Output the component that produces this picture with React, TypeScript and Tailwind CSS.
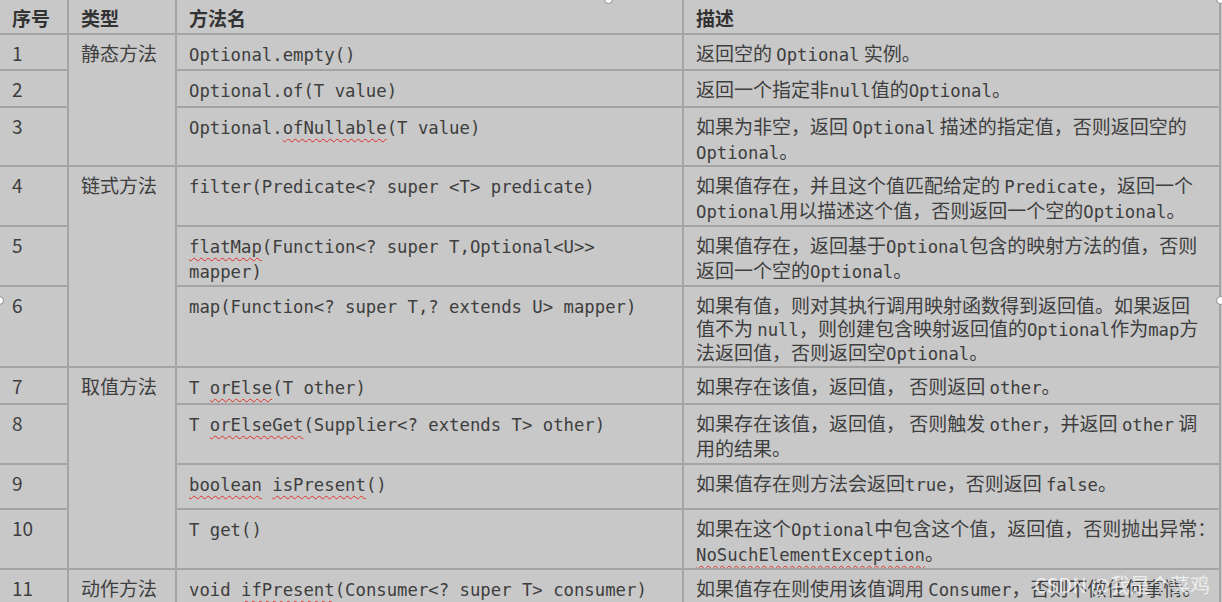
import React from "react";

const mono = "font-['DejaVu_Sans_Mono',monospace] text-[17.3px]";
const wavy =
  " underline decoration-wavy decoration-[#e0302a] decoration-1 underline-offset-[4px]";
const cell =
  "bg-[#c8c8c8] pl-3 pt-[7px] text-[19px] leading-[22.5px] text-[#3e3e3e] font-['Noto_Sans_CJK_SC',sans-serif] whitespace-nowrap overflow-hidden";

// ASCII runs go in the code font; in prose, spaces at the edges of a run stay narrow (CJK font)
function Ascii({ q, narrow }: { q: string; narrow: boolean }) {
  if (!narrow) return <span className={mono + " whitespace-pre"}>{q}</span>;
  const m = q.match(/^( *)([\s\S]*?)( *)$/);
  const lead = m ? m[1] : "";
  const body = m ? m[2] : q;
  const tail = m ? m[3] : "";
  return (
    <>
      {lead && <span className="whitespace-pre">{lead}</span>}
      {body && <span className={mono + " whitespace-pre"}>{body}</span>}
      {tail && <span className="whitespace-pre">{tail}</span>}
    </>
  );
}

function Mix({ t, narrow }: { t: string; narrow: boolean }) {
  const parts = t.split(/(~[^~]+~)/);
  return (
    <>
      {parts.map((p, i) =>
        p.startsWith("~") ? (
          <span key={i} className={mono + wavy}>
            {p.slice(1, -1)}
          </span>
        ) : (
          p.split(/([\x00-\x7F]+)/).map((q, j) =>
            /^[\x00-\x7F]+$/.test(q) ? (
              <Ascii key={i + "-" + j} q={q} narrow={narrow} />
            ) : (
              <React.Fragment key={i + "-" + j}>{q}</React.Fragment>
            )
          )
        )
      )}
    </>
  );
}

function Lines({ lines, narrow = false }: { lines: string[]; narrow?: boolean }) {
  return (
    <>
      {lines.map((l, i) => (
        <div key={i}>
          <Mix t={l} narrow={narrow} />
        </div>
      ))}
    </>
  );
}

type Row = { n: string; type?: string; span?: string; method: string[]; desc: string[] };

const rows: Row[] = [
  { n: "1", type: "静态方法", span: "row-span-3", method: ["Optional.empty()"], desc: ["返回空的 Optional 实例。"] },
  { n: "2", method: ["Optional.of(T value)"], desc: ["返回一个指定非null值的Optional。"] },
  {
    n: "3",
    method: ["Optional.~ofNullable~(T value)"],
    desc: ["如果为非空，返回 Optional 描述的指定值，否则返回空的", "Optional。"],
  },
  {
    n: "4",
    type: "链式方法",
    span: "row-span-3",
    method: ["filter(Predicate<? super <T> predicate)"],
    desc: ["如果值存在，并且这个值匹配给定的 Predicate，返回一个", "Optional用以描述这个值，否则返回一个空的Optional。"],
  },
  {
    n: "5",
    method: ["~flatMap~(Function<? super T,Optional<U>>", "mapper)"],
    desc: ["如果值存在，返回基于Optional包含的映射方法的值，否则", "返回一个空的Optional。"],
  },
  {
    n: "6",
    method: ["map(Function<? super T,? extends U> mapper)"],
    desc: [
      "如果有值，则对其执行调用映射函数得到返回值。如果返回",
      "值不为 null，则创建包含映射返回值的Optional作为map方",
      "法返回值，否则返回空Optional。",
    ],
  },
  {
    n: "7",
    type: "取值方法",
    span: "row-span-4",
    method: ["T ~orElse~(T other)"],
    desc: ["如果存在该值，返回值， 否则返回 other。"],
  },
  {
    n: "8",
    method: ["T ~orElseGet~(Supplier<? extends T> other)"],
    desc: ["如果存在该值，返回值， 否则触发 other，并返回 other 调", "用的结果。"],
  },
  { n: "9", method: ["~boolean~ ~isPresent~()"], desc: ["如果值存在则方法会返回true，否则返回 false。"] },
  {
    n: "10",
    method: ["T get()"],
    desc: ["如果在这个Optional中包含这个值，返回值，否则抛出异常：", "~NoSuchElementException~。"],
  },
  {
    n: "11",
    type: "动作方法",
    span: "row-span-1",
    method: ["void ~ifPresent~(Consumer<? super T> consumer)"],
    desc: ["如果值存在则使用该值调用 Consumer，否则不做任何事情。"],
  },
];

function Handle({ className }: { className: string }) {
  return (
    <div
      className={
        "absolute w-[9px] h-[9px] rounded-full bg-white border border-[#8a8a8a] " + className
      }
    />
  );
}

export default function App() {
  return (
    <div className="relative w-[1222px] h-[602px] overflow-hidden bg-[#c8c8c8]">
      <div className="grid grid-cols-[67px_106px_505px_535px] grid-rows-[33px_34px_35px_57px_58px_58px_79px_35px_58px_43px_58px_40px] gap-[2px] bg-[#a4a4a4] w-[1221px] pr-[2px]">
        {["序号", "类型", "方法名", "描述"].map((h) => (
          <div key={h} className={cell + " font-bold text-[#333]"}>
            {h}
          </div>
        ))}
        {rows.map((r) => (
          <React.Fragment key={r.n}>
            <div className={cell}>{r.n}</div>
            {r.type && <div className={cell + " " + r.span}>{r.type}</div>}
            <div className={cell}>
              <Lines lines={r.method} />
            </div>
            <div className={cell}>
              <Lines lines={r.desc} narrow />
            </div>
          </React.Fragment>
        ))}
      </div>
      <Handle className="left-[604px] top-[-5px]" />
      <Handle className="left-[-5px] top-[296px]" />
      <Handle className="left-[1216px] top-[296px]" />
      <Handle className="left-[1216px] top-[-5px]" />
      <div className="absolute right-[12px] bottom-[2px] text-[20px] text-white/70 font-['Noto_Sans_CJK_SC',sans-serif] whitespace-nowrap">
        CSDN @我是个菜鸡
      </div>
    </div>
  );
}
